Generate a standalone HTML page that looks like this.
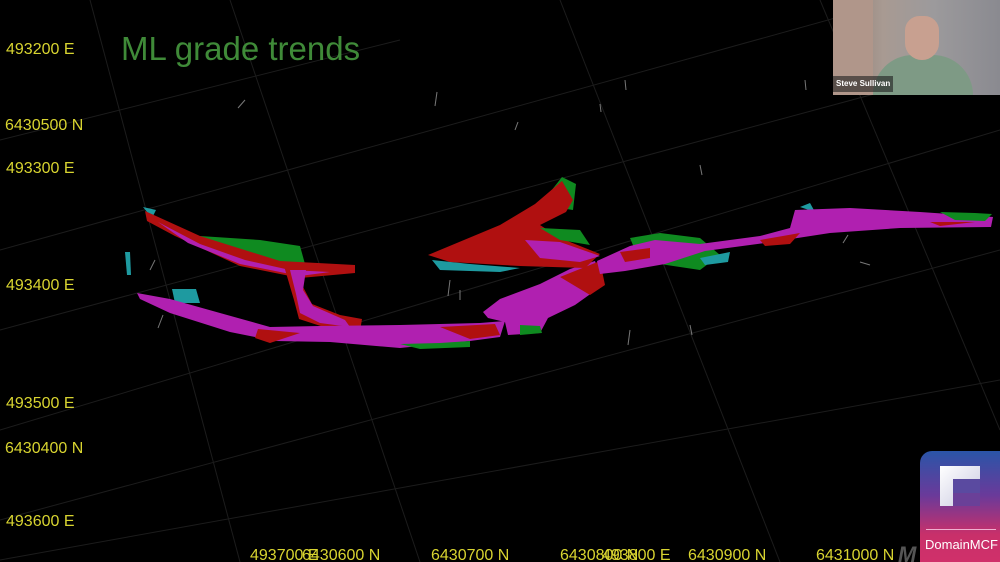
<!DOCTYPE html>
<html><head><meta charset="utf-8"><style>
html,body{margin:0;padding:0;background:#000;}
#p{position:relative;width:1000px;height:562px;overflow:hidden;background:#000;font-family:"Liberation Sans",sans-serif;}
.l{position:absolute;color:#d8d430;font-size:16px;line-height:18px;white-space:nowrap;}
#t{position:absolute;left:121px;top:30px;color:#3f8a38;font-size:33px;line-height:38px;}
#cam{position:absolute;left:833px;top:0;width:167px;height:95px;background:linear-gradient(90deg,#8a7a70 0%,#a89a92 30%,#9c9a9c 60%,#8a8a90 100%);overflow:hidden;}
#logo{position:absolute;left:920px;top:451px;width:80px;height:111px;border-radius:12px 0 0 0;background:linear-gradient(180deg,#2a55a8 0%,#6a3a9a 40%,#c8306a 75%,#d0306a 100%);}
</style></head><body><div id="p">
<svg width="1000" height="562" style="position:absolute;left:0;top:0">
<g stroke="#1c1c1c" stroke-width="1" fill="none">
<line x1="90" y1="0" x2="240" y2="562"/><line x1="0" y1="430" x2="1000" y2="130"/>
<line x1="230" y1="0" x2="420" y2="562"/><line x1="0" y1="140" x2="400" y2="40"/>
<line x1="560" y1="0" x2="780" y2="562"/><line x1="0" y1="330" x2="1000" y2="60"/>
<line x1="0" y1="560" x2="1000" y2="380"/><line x1="820" y1="0" x2="1000" y2="430"/>
<line x1="0" y1="250" x2="900" y2="0"/><line x1="0" y1="520" x2="1000" y2="250"/>
</g>
<g stroke="#aaa" stroke-width="1" opacity="0.7">
<line x1="238" y1="108" x2="245" y2="100"/><line x1="437" y1="92" x2="435" y2="106"/><line x1="600" y1="104" x2="601" y2="112"/><line x1="625" y1="80" x2="626" y2="90"/><line x1="805" y1="80" x2="806" y2="90"/><line x1="155" y1="260" x2="150" y2="270"/><line x1="163" y1="315" x2="158" y2="328"/><line x1="450" y1="280" x2="448" y2="296"/><line x1="460" y1="290" x2="460" y2="300"/><line x1="630" y1="330" x2="628" y2="345"/><line x1="843" y1="243" x2="848" y2="235"/><line x1="860" y1="262" x2="870" y2="265"/><line x1="690" y1="325" x2="692" y2="335"/><line x1="515" y1="130" x2="518" y2="122"/><line x1="700" y1="165" x2="702" y2="175"/>
</g>
<polygon fill="#0f8a20" points="200,236 260,240 300,246 305,264 260,264 215,252"/>
<polygon fill="#1e9aa0" points="143,207 156,210 152,218"/>
<polygon fill="#b01010" points="145,211 200,236 280,261 355,265 355,273 300,278 240,266 175,236 147,221"/>
<polygon fill="#b020b0" points="158,222 200,244 245,260 290,270 330,272 300,276 240,264 188,243"/>
<polygon fill="#b01010" points="284,266 306,266 302,285 312,304 340,315 362,319 360,331 330,329 299,319 294,300"/>
<polygon fill="#b020b0" points="290,270 306,270 303,290 313,306 345,320 350,327 320,323 300,313 296,294"/>
<polygon fill="#1e9aa0" points="172,289 196,289 200,303 175,303"/>
<polygon fill="#b020b0" points="137,293 170,299 220,313 270,327 320,326 400,325 480,323 505,321 500,337 470,341 400,348 330,342 275,341 230,332 170,313 140,299"/>
<polygon fill="#b01010" points="258,329 300,333 270,343 255,338"/>
<polygon fill="#b01010" points="440,327 495,324 500,335 470,339"/>
<polygon fill="#0f8a20" points="400,344 440,343 470,341 470,347 420,349"/>
<polygon fill="#b020b0" points="483,312 500,299 540,284 570,269 595,261 603,285 575,305 548,318 540,333 508,335 505,322 488,318"/>
<polygon fill="#b01010" points="560,277 600,261 605,285 590,295"/>
<polygon fill="#0f8a20" points="520,325 540,326 542,333 520,335"/>
<polygon fill="#0f8a20" points="540,205 562,177 576,184 573,210 560,208"/>
<polygon fill="#1e9aa0" points="432,260 470,264 520,268 500,272 440,270"/>
<polygon fill="#b01010" points="428,255 500,225 535,204 562,181 573,200 566,212 540,225 560,238 600,254 585,268 520,266 450,262"/>
<polygon fill="#0f8a20" points="540,228 580,230 590,245 560,240"/>
<polygon fill="#b020b0" points="525,240 560,242 600,256 580,262 540,258"/>
<polygon fill="#0f8a20" points="630,238 660,233 700,238 720,255 700,270 660,264 635,250"/>
<polygon fill="#1e9aa0" points="800,207 810,203 815,212"/>
<polygon fill="#b020b0" points="597,261 630,246 655,240 700,244 760,236 790,228 795,210 850,208 920,212 993,217 991,227 900,228 830,233 765,243 705,251 665,264 625,271 600,274"/>
<polygon fill="#b01010" points="760,240 800,233 790,244 765,246"/>
<polygon fill="#b01010" points="930,222 975,222 940,226"/>
<polygon fill="#b01010" points="620,252 650,248 650,258 625,262"/>
<polygon fill="#0f8a20" points="940,212 975,213 992,214 985,221 955,220"/>
<polygon fill="#1e9aa0" points="700,258 730,252 728,262 705,265"/>
<polygon fill="#1e9aa0" points="125,252 130,252 131,275 127,275"/>
</svg>
<div id="t">ML grade trends</div>
<div class="l" style="left:6px;top:41px">493200 E</div>
<div class="l" style="left:5px;top:117px">6430500 N</div>
<div class="l" style="left:6px;top:160px">493300 E</div>
<div class="l" style="left:6px;top:277px">493400 E</div>
<div class="l" style="left:6px;top:395px">493500 E</div>
<div class="l" style="left:5px;top:440px">6430400 N</div>
<div class="l" style="left:6px;top:513px">493600 E</div>
<div class="l" style="left:250px;top:547px">493700 E</div>
<div class="l" style="left:302px;top:547px">6430600 N</div>
<div class="l" style="left:431px;top:547px">6430700 N</div>
<div class="l" style="left:560px;top:547px">6430800 N</div>
<div class="l" style="left:602px;top:547px">493800 E</div>
<div class="l" style="left:688px;top:547px">6430900 N</div>
<div class="l" style="left:816px;top:547px">6431000 N</div>
<div style="position:absolute;left:898px;top:542px;color:#555;font-size:22px;font-weight:bold;font-style:italic">M</div>
<div id="cam">
<div style="position:absolute;left:0;top:0;width:40px;height:95px;background:#b0968a"></div>
<div style="position:absolute;left:40px;top:55px;width:100px;height:40px;border-radius:40px 40px 0 0;background:#7e9a85"></div>
<div style="position:absolute;left:72px;top:16px;width:34px;height:44px;border-radius:17px 17px 20px 20px;background:#c8a090"></div>
<div style="position:absolute;left:0;top:76px;width:60px;height:16px;background:rgba(30,30,30,.6)"></div>
<div style="position:absolute;left:3px;top:79px;color:#fff;font-size:8px;font-weight:bold">Steve Sullivan</div>
</div>
<div id="logo">
<div style="position:absolute;left:20px;top:15px;width:40px;height:40px;background:linear-gradient(135deg,#fff,#c8c8e0)"></div>
<div style="position:absolute;left:33px;top:28px;width:27px;height:14px;background:#5a4aa0"></div>
<div style="position:absolute;left:33px;top:42px;width:27px;height:13px;background:#6a4098"></div>
<div style="position:absolute;left:6px;top:78px;width:70px;height:1px;background:#f0b0d0"></div>
<div style="position:absolute;left:5px;top:86px;color:#fff;font-size:13px">DomainMCF</div>
</div>
</div></body></html>
